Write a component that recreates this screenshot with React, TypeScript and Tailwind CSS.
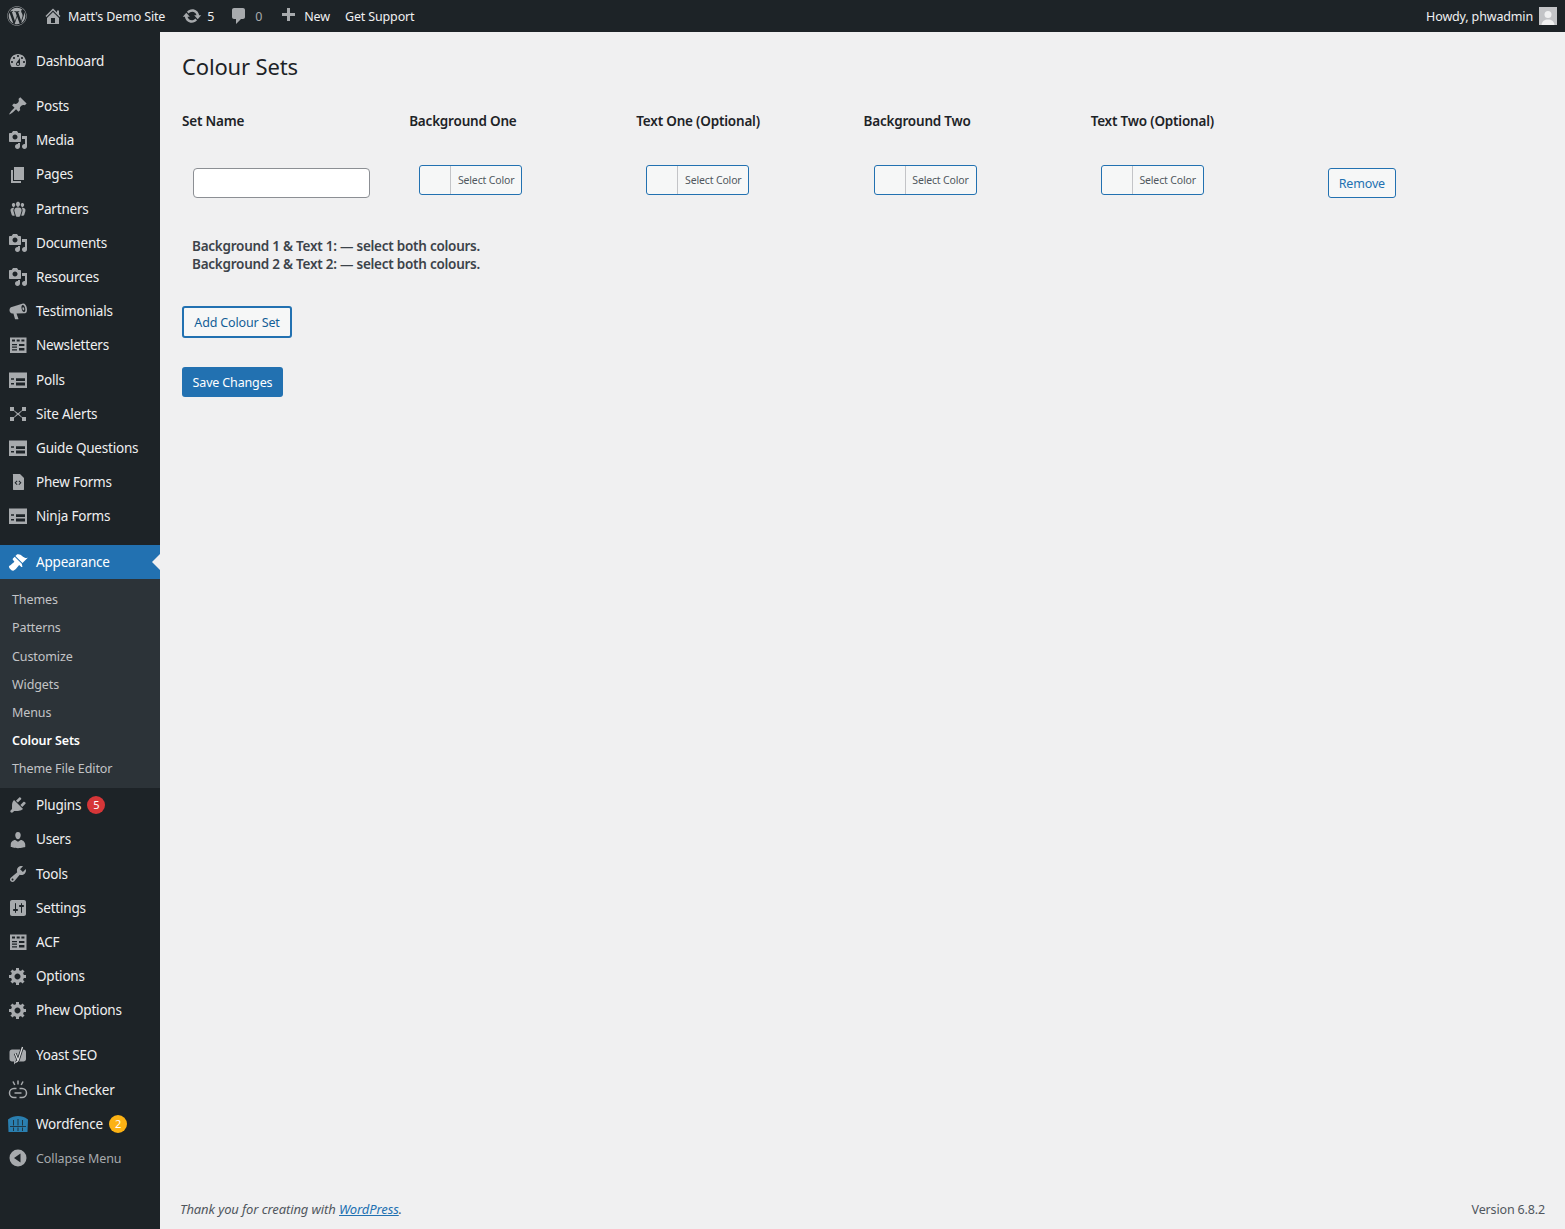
import { FaWordpress } from "react-icons/fa";

// dashicons paths, all on a 20x20 box
const P = {
  dashboard: "M3.76 16h12.48c1.1-1.37 1.76-3.11 1.76-5 0-4.42-3.58-8-8-8s-8 3.58-8 8c0 1.89.66 3.63 1.76 5zM10 4c.55 0 1 .45 1 1s-.45 1-1 1-1-.45-1-1 .45-1 1-1zM6 6c.55 0 1 .45 1 1s-.45 1-1 1-1-.45-1-1 .45-1 1-1zm8 0c.55 0 1 .45 1 1s-.45 1-1 1-1-.45-1-1 .45-1 1-1zm-5.37 5.55L12 7v6c0 1.1-.9 2-2 2s-2-.9-2-2c0-.57.24-1.08.63-1.45zM4 10c.55 0 1 .45 1 1s-.45 1-1 1-1-.45-1-1 .45-1 1-1zm12 0c.55 0 1 .45 1 1s-.45 1-1 1-1-.45-1-1 .45-1 1-1zm-5 3c0-.55-.45-1-1-1s-1 .45-1 1 .45 1 1 1 1-.45 1-1z",
  post: "M10.44 3.02l1.82-1.82 6.36 6.35-1.83 1.82c-1.05-.68-2.48-.57-3.41.36l-.75.75c-.92.93-1.04 2.35-.35 3.41l-1.83 1.82-2.41-2.41-2.8 2.79c-.42.42-3.38 2.71-3.8 2.29s1.86-3.39 2.28-3.81l2.79-2.79L4.1 9.36l1.83-1.82c1.05.69 2.48.57 3.4-.36l.75-.75c.93-.92 1.05-2.35.36-3.41z",
  media: "M13 11V4c0-.55-.45-1-1-1h-1.67L9 1H5L3.67 3H2c-.55 0-1 .45-1 1v7c0 .55.45 1 1 1h10c.55 0 1-.45 1-1zM7 4.5c1.38 0 2.5 1.12 2.5 2.5S8.38 9.5 7 9.5 4.5 8.38 4.5 7 5.62 4.5 7 4.5zM14 6h5v10.5c0 1.38-1.12 2.5-2.5 2.5S14 17.88 14 16.5s1.12-2.5 2.5-2.5c.17 0 .34.02.5.05V9h-3V6zm-4 8.05V13h2v3.5c0 1.38-1.12 2.5-2.5 2.5S7 17.88 7 16.5 8.12 14 9.5 14c.17 0 .34.02.5.05z",
  page: "M6 15V2h10v13H6zm-1 1h8v2H3V5h2v11z",
  groups: "M8.03 4.46c-.29 1.28.55 3.46 1.97 3.46 1.41 0 2.25-2.18 1.96-3.46-.22-.98-1.08-1.63-1.96-1.63-.89 0-1.74.65-1.97 1.63zm-4.13.9c-.25 1.08.47 2.93 1.67 2.93s1.92-1.85 1.67-2.93c-.19-.83-.92-1.39-1.67-1.39s-1.48.56-1.67 1.39zm8.86 0c-.25 1.08.47 2.93 1.66 2.93 1.2 0 1.92-1.85 1.67-2.93-.19-.83-.92-1.39-1.67-1.39-.74 0-1.47.56-1.66 1.39zm-.59 11.43l1.25-4.3C14.2 10 12.71 8.47 10 8.47c-2.72 0-4.21 1.53-3.44 4.02l1.26 4.3C8.05 17.51 9 18 10 18c.98 0 1.94-.49 2.17-1.21zm-6.1-7.63c-.49.67-.96 1.83-.42 3.59l1.12 3.79c-.34.2-.77.31-1.2.31-.85 0-1.65-.41-1.85-1.03l-1.07-3.65c-.65-2.11.61-3.4 2.92-3.4.27 0 .54.02.79.06-.1.1-.2.22-.29.33zm8.35-.39c2.31 0 3.58 1.29 2.92 3.4l-1.07 3.65c-.2.62-1 1.03-1.85 1.03-.43 0-.86-.11-1.2-.31l1.11-3.77c.55-1.78.08-2.94-.42-3.61-.08-.11-.18-.23-.28-.33.25-.04.51-.06.79-.06z",
  megaphone: "M15 2.5c1.6-.4 3.2 1.6 3.8 4.2.6 2.7 0 5.2-1.6 5.6L8.5 12.5l1.9 5.2c.1.3-.1.6-.4.6H7.500c-.2 0-.4-.1-.5-.4L5.400 12.600H4.200C2.800 12.600 1.500 11.200 1.500 9.300S2.500 6.400 3.800 6.100zM14.500 4c-1 .3-1.300 2-.8 4s1.600 3.300 2.600 3c1-.3 1.300-2 .8-4S15.500 3.700 14.500 4zM15 6.200c.5-.1 1 .5 1.200 1.400.2.800 0 1.600-.5 1.700s-1-.5-1.200-1.400c-.2-.8 0-1.600.5-1.700z",
  layout: "M2 2.500h16.500V18H2V2.500zM4 4.500v2h3v-2H4zm4.700 0v2h3v-2h-3zm4.700 0v2h3v-2h-3zM4 9v1.200h5V9H4zm0 2.600v1.200h5v-1.200H4zm0 2.600v1.200h5v-1.200H4zM11 9v2h5.400V9H11zm0 4v2.400h5.400V13H11z",
  forms: "M1 2.500h18v15.500H1V2.500zM3 8.200v1.600h3V8.200H3zm5 0v2.800h9V8.200H8zM3 13v1.600h3V13H3zm5-.6v3h9v-3H8z",
  network: "M2 3h4v4H2zM14 3h4v4h-4zM2 13h4v4H2zM14 13h4v4h-4zM6 6.200L10 9.200 14 6.200V7L11 10l3 3v.8L10 10.800 6 13.800V13L9 10 6 7z",
  docCode: "M5 2h7l4 4v11.500c0 .3-.2.5-.5.5h-10c-.3 0-.5-.2-.5-.5V2.500C4.500 2.200 4.700 2 5 2zM8.800 8.500L6.500 10.800l2.300 2.300.7-.7-1.600-1.600 1.600-1.600-.7-.7zm2.400 0l-.7.700 1.600 1.600-1.600 1.600.7.700 2.300-2.300-2.300-2.300z",
  appearance: "M14.480 11.060L7.410 3.990l1.500-1.500c.5-.56 2.300-.47 3.510.32 1.210.8 1.430 1.280 2.910 2.100 1.180.64 2.450 1.260 4.450.85zm-.71.71L6.700 4.700 4.930 6.470c-.39.39-.39 1.020 0 1.410l1.060 1.060c.39.39.39 1.030 0 1.420-.6.6-1.430 1.110-2.210 1.690-.35.26-.7.53-1.010.84C1.430 13.230.5 14.400 1.100 15.500c.3.53.52.88 1.360 1.680s1.380 1.100 1.940 1.370c1.090.59 2.260-.33 3.630-1.680.31-.31.58-.66.84-1.010.58-.78 1.090-1.610 1.690-2.210.39-.39 1.030-.39 1.420 0l1.060 1.060c.39.39 1.020.39 1.410 0z",
  plugin: "M13.110 4.360L9.870 7.600 8 5.730l3.240-3.240c.35-.34 1.050-.2 1.560.32.52.51.66 1.210.31 1.550zm-8 1.770l.91-1.120 9.010 9.010-1.190.84c-.71.71-2.630 1.160-3.820 1.160H6.140L4.900 17.260c-.59.59-1.540.59-2.120 0-.59-.58-.59-1.530 0-2.120l1.240-1.240v-3.880c0-1.130.4-3.190 1.090-3.890zm7.260 3.970l3.240-3.240c.34-.35 1.040-.21 1.550.31.52.51.66 1.210.31 1.550l-3.240 3.250z",
  users: "M10 9.250c-2.270 0-2.730-3.440-2.730-3.440C7 4.020 7.820 2 9.970 2c2.160 0 2.980 2.020 2.710 3.810 0 0-.41 3.440-2.680 3.440zm0 2.570L12.720 10c2.390 0 4.520 2.330 4.520 4.530v2.490s-3.650 1.130-7.240 1.130c-3.650 0-7.240-1.130-7.240-1.130v-2.490c0-2.250 1.940-4.480 4.470-4.480z",
  tools: "M16.680 9.770c-1.340 1.340-3.300 1.670-4.950.99l-5.410 6.520c-.99.99-2.590.99-3.580 0s-.99-2.590 0-3.570l6.520-5.420c-.68-1.650-.35-3.610.99-4.950 1.280-1.280 3.120-1.620 4.720-1.060l-2.890 2.890 2.820 2.820 2.860-2.870c.53 1.580.18 3.390-1.080 4.650zM3.810 16.210c.4.39 1.040.39 1.430 0 .4-.4.4-1.040 0-1.430-.39-.4-1.030-.4-1.430 0-.39.39-.39 1.030 0 1.430z",
  settings: "M18 16V4c0-1.100-.9-2-2-2H4c-1.100 0-2 .9-2 2v12c0 1.100.9 2 2 2h12c1.100 0 2-.9 2-2zM8 11h1c.55 0 1 .45 1 1s-.45 1-1 1H8v1.500c0 .28-.22.5-.5.5s-.5-.22-.5-.5V13H6c-.55 0-1-.45-1-1s.45-1 1-1h1V5.500c0-.28.22-.5.5-.5s.5.22.5.5V11zm5-2h-1c-.55 0-1-.45-1-1s.45-1 1-1h1V5.500c0-.28.22-.5.5-.5s.5.22.5.5V7h1c.55 0 1 .45 1 1s-.45 1-1 1h-1v5.500c0 .28-.22.5-.5.5s-.5-.22-.5-.5V9z",
  generic: "M18 12h-2.180c-.17.7-.44 1.350-.81 1.930l1.540 1.540-2.100 2.100-1.540-1.540c-.58.36-1.230.63-1.910.79V19H8v-2.180c-.68-.16-1.330-.43-1.910-.79l-1.540 1.540-2.120-2.120 1.540-1.540c-.36-.58-.63-1.230-.79-1.910H1V9.030h2.170c.16-.7.44-1.350.8-1.940L2.430 5.550l2.100-2.100 1.540 1.540c.58-.37 1.240-.64 1.930-.81V2h3v2.180c.68.16 1.330.43 1.910.79l1.540-1.540 2.120 2.120-1.540 1.540c.36.59.64 1.240.8 1.940H18V12zm-8.500 1.500c1.660 0 3-1.340 3-3s-1.340-3-3-3-3 1.340-3 3 1.340 3 3 3z",
  wordfence: "M0 5.500C3.500 2.800 6.700 2 10 2s6.500.8 10 3.500l-.5 12.500H.5L0 5.500zM5 6v5.500H5.800V6H5zm4.600-1v6.500h.8V5h-.8zm4.600 1v5.500h.8V6h-.8zM2 12v.8h16V12H2zm3 1.500V17h.8v-3.500H5zm4.600 0V17h.8v-3.500h-.8zm4.600 0V17h.8v-3.500h-.8z",
  collapse: "M10 1.500a8.500 8.500 0 1 0 0 17 8.500 8.500 0 0 0 0-17zM12.500 5.500v9L6 10l6.500-4.500z",
  home: "M16 8.500l1.530 1.530-1.060 1.060L10 4.620l-6.470 6.470-1.060-1.060L10 2.500l4 4v-2h2v4zm-6-2.460l6 5.990V18H4v-5.970zM12 17v-5H8v5h4z",
  update: "M10.200 3.280c3.530 0 6.430 2.610 6.920 6h2.080l-3.500 4-3.500-4h2.320c-.45-1.970-2.210-3.450-4.320-3.450-1.450 0-2.730.71-3.540 1.780L4.950 5.660C6.230 4.200 8.110 3.280 10.200 3.280zm-.4 13.440c-3.520 0-6.430-2.610-6.920-6H.8l3.500-4c1.170 1.330 2.330 2.670 3.500 4H5.480c.45 1.970 2.210 3.450 4.320 3.450 1.450 0 2.730-.71 3.540-1.780l1.710 1.950c-1.280 1.460-3.150 2.380-5.250 2.380z",
  comment: "M5 2h9c1.100 0 2 .9 2 2v7c0 1.100-.9 2-2 2h-2l-5 5v-5H5c-1.100 0-2-.9-2-2V4c0-1.100.9-2 2-2z",
  plus: "M17 7v3h-5v5H9v-5H4V7h5V2h3v5h5z",
};

function Ico({ d, className = "h-5 w-5 text-[#a7aaad]" }: { d: string; className?: string }) {
  return (
    <svg viewBox="0 0 20 20" fill="currentColor" fillRule="evenodd" className={className}>
      <path d={d} />
    </svg>
  );
}

function YoastIcon() {
  return (
    <svg viewBox="0 0 20 20" className="h-5 w-5">
      <path fill="#a7aaad" d="M4 3.500h11.500c1.400 0 2.500 1.100 2.500 2.500v7c0 1.400-1.100 2.500-2.500 2.500H9L6 18.500v-3H4c-1.400 0-2.500-1.100-2.500-2.500V6c0-1.400 1.100-2.500 2.500-2.500z" />
      <path fill="none" stroke="#1d2327" strokeWidth="2.800" d="M7.200 7.500l2.600 6.300M14.500 1l-4.200 13c-.4 1.200-1.200 2-3 2.300" />
      <path fill="none" stroke="#dcdcde" strokeWidth="1.300" d="M7.200 7.500l2.600 6.300M14.500 1l-4.200 13c-.4 1.200-1.200 2-3 2.300" />
    </svg>
  );
}

function LinkIcon() {
  return (
    <svg viewBox="0 0 20 20" className="h-5 w-5" fill="none" stroke="#a7aaad" strokeWidth="1.500">
      <path d="M5 1.500l1.800 3.500M10 .5v4M15 1.500L13.200 5" />
      <path d="M8.500 8.500H6a4.500 4.500 0 0 0 0 9h2.500M11.500 8.500H14a4.500 4.500 0 0 1 0 9h-2.500M6.500 13h7" />
    </svg>
  );
}

function MenuItem({ icon, label, badge }: { icon: React.ReactNode; label: string; badge?: React.ReactNode }) {
  return (
    <li className="flex h-[34.18px] items-center pl-2 text-[#f0f0f1]">
      {icon}
      <span className="ml-2">{label}</span>
      {badge}
    </li>
  );
}

function Badge({ n, color }: { n: number; color: string }) {
  return <span className={`ml-[6px] flex h-[18px] w-[18px] items-center justify-center rounded-full text-[11px] text-white ${color}`}>{n}</span>;
}

const group1 = [
  { icon: P.post, label: "Posts" },
  { icon: P.media, label: "Media" },
  { icon: P.page, label: "Pages" },
  { icon: P.groups, label: "Partners" },
  { icon: P.media, label: "Documents" },
  { icon: P.media, label: "Resources" },
  { icon: P.megaphone, label: "Testimonials" },
  { icon: P.layout, label: "Newsletters" },
  { icon: P.forms, label: "Polls" },
  { icon: P.network, label: "Site Alerts" },
  { icon: P.forms, label: "Guide Questions" },
  { icon: P.docCode, label: "Phew Forms" },
  { icon: P.forms, label: "Ninja Forms" },
];

const submenu = ["Themes", "Patterns", "Customize", "Widgets", "Menus", "Colour Sets", "Theme File Editor"];

function Sidebar() {
  return (
    <aside className="w-40 shrink-0 bg-[#1d2327] pt-3 text-[13.5px] tracking-[-0.2px]">
      <ul>
        <MenuItem icon={<Ico d={P.dashboard} />} label="Dashboard" />
      </ul>
      <ul className="mt-[11px]">
        {group1.map((m) => (
          <MenuItem key={m.label} icon={<Ico d={m.icon} />} label={m.label} />
        ))}
      </ul>
      <div className="relative mt-[11.48px] flex h-[34.2px] items-center bg-[#2271b1] pl-2 text-white">
        <Ico d={P.appearance} className="h-5 w-5 text-white" />
        <span className="ml-2">Appearance</span>
        {/* little arrow pointing at the content */}
        <span className="absolute right-0 top-[9px] h-0 w-0 border-y-[8px] border-r-[8px] border-y-transparent border-r-[#f0f0f1]" />
      </div>
      <ul className="bg-[#2c3338] pb-[4.6px] pt-[7.5px] text-[12.5px] tracking-[-0.1px] text-[#c3c4c7]">
        {submenu.map((s) => (
          <li key={s} className={`flex h-[28.17px] items-center pl-3 ${s === "Colour Sets" ? "font-semibold text-white" : ""}`}>
            {s}
          </li>
        ))}
      </ul>
      <ul>
        <MenuItem icon={<Ico d={P.plugin} />} label="Plugins" badge={<Badge n={5} color="bg-[#d63638]" />} />
        <MenuItem icon={<Ico d={P.users} />} label="Users" />
        <MenuItem icon={<Ico d={P.tools} />} label="Tools" />
        <MenuItem icon={<Ico d={P.settings} />} label="Settings" />
        <MenuItem icon={<Ico d={P.layout} />} label="ACF" />
        <MenuItem icon={<Ico d={P.generic} />} label="Options" />
        <MenuItem icon={<Ico d={P.generic} />} label="Phew Options" />
      </ul>
      <ul className="mt-[11px]">
        <MenuItem icon={<YoastIcon />} label="Yoast SEO" />
        <MenuItem icon={<LinkIcon />} label="Link Checker" />
        <MenuItem icon={<Ico d={P.wordfence} className="h-5 w-5 text-[#2a7fb0]" />} label="Wordfence" badge={<Badge n={2} color="bg-[#fcb214]" />} />
        <li className="flex h-[34.18px] items-center pl-2 text-[12.5px] tracking-[-0.1px] text-[#a7aaad]">
          <Ico d={P.collapse} />
          <span className="ml-2 pt-[2px]">Collapse Menu</span>
        </li>
      </ul>
    </aside>
  );
}

function TopBar() {
  return (
    <header className="flex h-8 shrink-0 items-center justify-between bg-[#1d2327] pl-[7px] pr-2 text-[12.5px] tracking-[-0.15px] text-[#f0f0f1]">
      <div className="flex items-center">
        <FaWordpress className="h-5 w-5 text-[#a7aaad]" />
        <Ico d={P.home} className="ml-[16px] h-5 w-5 text-[#a7aaad]" />
        <span className="ml-[5px] pt-[2px]">Matt's Demo Site</span>
        <Ico d={P.update} className="ml-[17px] h-5 w-5 text-[#a7aaad]" />
        <span className="ml-[5px] pt-[2px]">5</span>
        <Ico d={P.comment} className="ml-[15px] h-5 w-5 text-[#a7aaad]" />
        <span className="ml-[6px] pt-[2px] text-[#a7aaad]">0</span>
        <Ico d={P.plus} className="ml-[16px] h-5 w-5 text-[#a7aaad]" />
        <span className="ml-[6px] pt-[2px]">New</span>
        <span className="ml-[15px] pt-[2px]">Get Support</span>
      </div>
      <div className="flex items-center">
        <span className="pt-[2px]">Howdy, phwadmin</span>
        <span className="ml-[6px] flex h-[18px] w-[18px] items-end justify-center overflow-hidden bg-[#c3c4c7]">
          <svg viewBox="0 0 18 18" className="h-[18px] w-[18px]" fill="#f0f0f1">
            <circle cx="9" cy="7.500" r="3.500" />
            <path d="M2.500 18c.5-4 3-5.500 6.500-5.500s6 1.500 6.500 5.500z" />
          </svg>
        </span>
      </div>
    </header>
  );
}

function ColorPicker() {
  return (
    <button className="ml-[10px] flex h-[30px] w-[103px] items-stretch overflow-hidden rounded-[3px] border border-[#2271b1] bg-[#f6f7f7] text-[10.5px] text-[#50575e]">
      <span className="w-[31px] border-r border-[#c3c4c7]" />
      <span className="flex flex-1 items-center justify-center pt-[2px]">Select Color</span>
    </button>
  );
}

export default function App() {
  const heads = ["Set Name", "Background One", "Text One (Optional)", "Background Two", "Text Two (Optional)", ""];
  return (
    <div className="flex min-h-screen flex-col bg-[#f0f0f1] font-['Noto_Sans',sans-serif] text-[13.5px] tracking-[-0.15px] text-[#3c434a]">
      <TopBar />
      <div className="flex flex-1">
        <Sidebar />
        <main className="flex min-w-0 flex-1 flex-col pl-[22px] pr-5">
          <h1 className="mt-[18px] text-[22px] leading-[32px] tracking-[-0.15px] text-[#1d2327]">Colour Sets</h1>

          <div className="mt-[29px] grid grid-cols-6 font-semibold tracking-[-0.2px] text-[#1d2327]">
            {heads.map((h, i) => (
              <div key={i} className="leading-5">{h}</div>
            ))}
          </div>

          <div className="mt-[34px] grid grid-cols-6">
            <div className="pl-[11px] pt-[3px]">
              <input className="block h-[30px] w-[177px] rounded-[4px] border border-[#8c8f94] bg-white" />
            </div>
            <div><ColorPicker /></div>
            <div><ColorPicker /></div>
            <div><ColorPicker /></div>
            <div><ColorPicker /></div>
            <div className="pl-[10px] pt-[3px]">
              <button className="h-[30px] w-[68px] rounded-[3px] border border-[#2271b1] bg-[#f6f7f7] pt-[2px] text-[12.5px] text-[#2271b1]">Remove</button>
            </div>
          </div>

          <div className="mt-[39px] pl-[10px] font-semibold leading-[18px] tracking-[-0.25px]">
            <div>Background 1 &amp; Text 1: — select both colours.</div>
            <div>Background 2 &amp; Text 2: — select both colours.</div>
          </div>

          <button className="mt-[33px] h-8 w-[110px] rounded-[3px] border-2 border-[#2271b1] bg-[#f6f7f7] pt-[2px] text-[12.5px] text-[#135e96]">Add Colour Set</button>
          <button className="mt-[29px] h-[30px] w-[101px] rounded-[3px] bg-[#2271b1] pt-[2px] text-[12.5px] text-white">Save Changes</button>

          <footer className="mb-[8px] ml-[-2px] mt-auto flex items-center justify-between text-[12.5px] text-[#50575e]">
            <span className="pb-[2px] text-[13px] italic tracking-[-0.1px]">
              Thank you for creating with <span className="text-[#2271b1] underline">WordPress</span>.
            </span>
            <span>Version 6.8.2</span>
          </footer>
        </main>
      </div>
    </div>
  );
}
